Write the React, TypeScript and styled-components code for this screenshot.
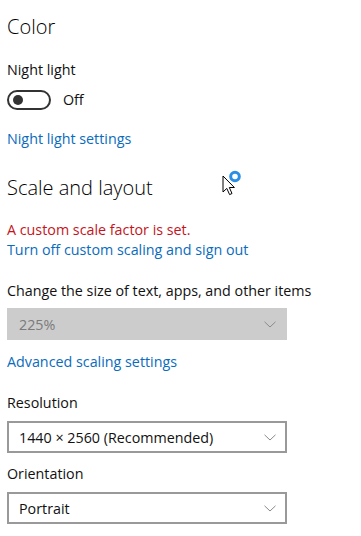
import React from "react";
import styled, { createGlobalStyle } from "styled-components";

const Global = createGlobalStyle`
  html, body { margin: 0; padding: 0; background: #ffffff; }
  body { font-family: "Open Sans", "Noto Sans", "Liberation Sans", sans-serif; color: #000; }
`;

const Page = styled.div`
  position: relative;
  width: 361px;
  height: 536px;
  padding: 13px 0 0 7px;
  box-sizing: border-box;
  display: flex;
  flex-direction: column;
  overflow: hidden;
`;

const Heading = styled.div<{ $mt?: number }>`
  font-size: 20px;
  line-height: 28px;
  font-weight: 300;
  color: #000;
  margin-top: ${(p) => p.$mt ?? 0}px;
`;

const Label = styled.div<{ $mt?: number }>`
  font-size: 14.3px;
  line-height: 20px;
  color: #111;
  margin-top: ${(p) => p.$mt ?? 0}px;
`;

const Link = styled.div<{ $mt?: number }>`
  font-size: 14.3px;
  line-height: 20px;
  color: #0a6cbd;
  margin-top: ${(p) => p.$mt ?? 0}px;
`;

const Warning = styled.div<{ $mt?: number }>`
  font-size: 14.3px;
  line-height: 20px;
  color: #c4141c;
  margin-top: ${(p) => p.$mt ?? 0}px;
`;

const ToggleRow = styled.div`
  display: flex;
  align-items: center;
  gap: 12px;
  height: 20px;
  margin-top: 10px;
`;

const Track = styled.div`
  width: 44px;
  height: 20px;
  box-sizing: border-box;
  border: 2px solid #333;
  border-radius: 10px;
  display: flex;
  align-items: center;
  padding-left: 4px;
`;

const Knob = styled.div`
  width: 10px;
  height: 10px;
  border-radius: 50%;
  background: #333;
`;

const Select = styled.div<{ $disabled?: boolean; $mt?: number }>`
  width: 280px;
  height: 32px;
  box-sizing: border-box;
  margin-top: ${(p) => p.$mt ?? 0}px;
  border: 2px solid ${(p) => (p.$disabled ? "#cccccc" : "#999999")};
  background: ${(p) => (p.$disabled ? "#cccccc" : "#ffffff")};
  color: ${(p) => (p.$disabled ? "#7a7a7a" : "#111")};
  display: flex;
  align-items: center;
  justify-content: space-between;
  padding: 0 9px 0 10px;
  font-size: 14.3px;
`;

const Chevron = styled.svg`
  width: 12px;
  height: 7px;
  flex: none;
`;

const Cursor = styled.div`
  position: absolute;
  left: 222px;
  top: 170px;
  width: 24px;
  height: 28px;
`;

const Arrow = () => (
  <Chevron viewBox="0 0 12 7">
    <path d="M0.5 0.8 L6 6 L11.5 0.8" fill="none" stroke="#8a8a8a" strokeWidth="1" />
  </Chevron>
);

export default function App() {
  return (
    <>
      <Global />
      <Page>
        <Heading>Color</Heading>
        <Label $mt={19}>Night light</Label>
        <ToggleRow>
          <Track>
            <Knob />
          </Track>
          <Label>Off</Label>
        </ToggleRow>
        <Link $mt={19}>Night light settings</Link>
        <Heading $mt={25}>Scale and layout</Heading>
        <Warning $mt={18}>A custom scale factor is set.</Warning>
        <Link>Turn off custom scaling and sign out</Link>
        <Label $mt={21}>Change the size of text, apps, and other items</Label>
        <Select $disabled $mt={7}>
          <span>225%</span>
          <Arrow />
        </Select>
        <Link $mt={12}>Advanced scaling settings</Link>
        <Label $mt={21}>Resolution</Label>
        <Select $mt={8}>
          <span>1440 × 2560 (Recommended)</span>
          <Arrow />
        </Select>
        <Label $mt={11}>Orientation</Label>
        <Select $mt={8}>
          <span>Portrait</span>
          <Arrow />
        </Select>
        <Cursor>
          <svg width="24" height="28" viewBox="0 0 24 28">
            <path
              d="M1 6 L1 22 L4.8 18.4 L7.6 24.6 L10 23.5 L7.3 17.5 L12.4 17.5 Z"
              fill="#ffffff"
              stroke="#000"
              strokeWidth="1"
              strokeLinejoin="miter"
            />
            <circle cx="13" cy="6.5" r="4.3" fill="none" stroke="#2a8ee6" strokeWidth="3" />
          </svg>
        </Cursor>
      </Page>
    </>
  );
}
